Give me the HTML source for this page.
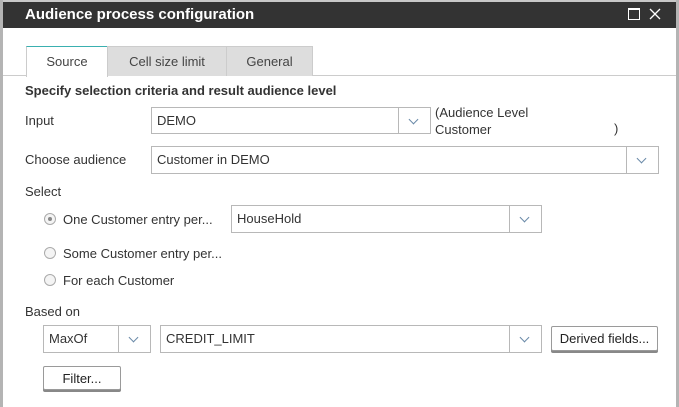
<!DOCTYPE html>
<html><head><style>
*{box-sizing:border-box;margin:0;padding:0}
body{width:679px;height:407px;background:#fff;font-family:"Liberation Sans",Arial,sans-serif;font-size:13px;color:#333;position:relative;overflow:hidden}
.a{position:absolute}
.box{position:absolute;border:1px solid #b8b8b8;background:#fff;padding-left:5px;line-height:26px;color:#333}
.arr{position:absolute;top:0;right:0;bottom:0;width:32px;border-left:1px solid #b8b8b8}
.arr:after{content:"";position:absolute;left:11px;top:8px;width:6px;height:6px;border-right:1px solid #6a8aa8;border-bottom:1px solid #6a8aa8;transform:rotate(45deg)}
.btn{position:absolute;border:1px solid #9a9a9a;border-radius:2px;background:#fff;box-shadow:0 2px 0 #888;text-align:center;line-height:23px;color:#222}
.rad{position:absolute;width:12px;height:12px;border:1px solid #aaa;border-radius:50%;background:#f4f4f4}
.tab{position:absolute;top:46px;height:30px;border:1px solid #ccc;border-bottom:none;background:#ddd;text-align:center;line-height:29px;color:#444}
</style></head><body>
<div class="a" style="left:0;top:0;width:679px;height:2px;background:#c8c8c8"></div>
<div class="a" style="left:0;top:0;width:3px;height:407px;background:#b4b4b4"></div>
<div class="a" style="right:0;top:0;width:3px;height:407px;background:#b4b4b4"></div>
<div class="a" style="left:3px;top:2px;width:673px;height:26px;background:#333"></div>
<div class="a" style="left:25px;top:6px;color:#fff;font-weight:bold;font-size:15px">Audience process configuration</div>
<div class="a" style="left:628px;top:8px;width:12px;height:12px;border:1px solid #fff;border-top-width:2px"></div>
<svg class="a" style="left:649px;top:8px" width="12" height="12"><path d="M1 1L11 11M11 1L1 11" stroke="#fff" stroke-width="1.3"/></svg>
<div class="a" style="left:3px;top:75px;width:673px;height:1px;background:#ccc"></div>
<div class="tab" style="left:26px;width:82px;background:#fff;border-top:1px solid #3ab0b0;height:31px">Source</div>
<div class="tab" style="left:107px;width:120px">Cell size limit</div>
<div class="tab" style="left:226px;width:87px">General</div>
<div class="a" style="left:25px;top:83px;font-weight:bold;color:#333">Specify selection criteria and result audience level</div>
<div class="a" style="left:25px;top:113px">Input</div>
<div class="box" style="left:151px;top:107px;width:280px;height:27px">DEMO<div class="arr"></div></div>
<div class="a" style="left:435px;top:104px;line-height:17px">(Audience Level<br>Customer</div>
<div class="a" style="left:614px;top:121px">)</div>
<div class="a" style="left:25px;top:152px">Choose audience</div>
<div class="box" style="left:151px;top:146px;width:508px;height:28px">Customer in DEMO<div class="arr"></div></div>
<div class="a" style="left:25px;top:184px">Select</div>
<div class="rad" style="left:44px;top:213px"></div><div class="a" style="left:48px;top:217px;width:4px;height:4px;border-radius:50%;background:#888"></div>
<div class="a" style="left:63px;top:212px">One Customer entry per...</div>
<div class="box" style="left:231px;top:205px;width:311px;height:28px">HouseHold<div class="arr"></div></div>
<div class="rad" style="left:44px;top:247px"></div>
<div class="a" style="left:63px;top:246px">Some Customer entry per...</div>
<div class="rad" style="left:44px;top:274px"></div>
<div class="a" style="left:63px;top:273px">For each Customer</div>
<div class="a" style="left:25px;top:304px">Based on</div>
<div class="box" style="left:43px;top:325px;width:108px;height:28px">MaxOf<div class="arr"></div></div>
<div class="box" style="left:160px;top:325px;width:382px;height:28px">CREDIT_LIMIT<div class="arr"></div></div>
<div class="btn" style="left:551px;top:326px;width:107px;height:25px">Derived fields...</div>
<div class="btn" style="left:43px;top:366px;width:78px;height:24px">Filter...</div>
</body></html>
